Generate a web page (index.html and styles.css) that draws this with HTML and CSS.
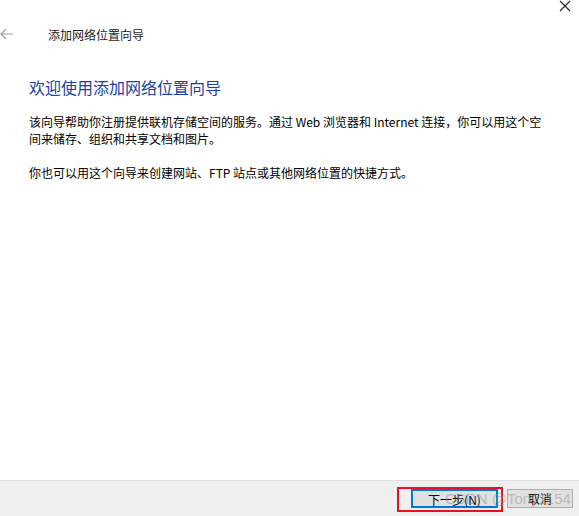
FILE: index.html
```html
<!DOCTYPE html>
<html lang="zh-CN">
<head>
    <meta charset="UTF-8">
    <meta name="viewport" content="width=device-width, initial-scale=1.0">
    <title>添加网络位置向导</title>
    <link rel="stylesheet" href="styles.css">
</head>
<body>
    <div class="wizard">
        <div class="close">
            <svg width="12" height="12" viewBox="0 0 12 12"><path d="M1 1 L11 11 M11 1 L1 11" stroke="#222" stroke-width="1.1" fill="none"/></svg>
        </div>

        <div class="titlebar">
            <span class="back">
                <svg width="14" height="12" viewBox="0 0 14 12"><path d="M6 1 L1 6 L6 11 M1 6 L13 6" stroke="#a0a0a0" stroke-width="1.2" fill="none"/></svg>
            </span>
            <span class="title">添加网络位置向导</span>
        </div>

        <div class="content">
            <h1>欢迎使用添加网络位置向导</h1>
            <p>该向导帮助你注册提供联机存储空间的服务。通过 Web 浏览器和 Internet 连接，你可以用这个空间来储存、组织和共享文档和图片。</p>
            <p>你也可以用这个向导来创建网站、FTP 站点或其他网络位置的快捷方式。</p>
        </div>

        <div class="footer">
            <div class="mark"></div>
            <button class="btn btn-default">下一步(N)</button>
            <button class="btn">取消</button>
            <span class="watermark">CSDN @Tony1154</span>
        </div>
    </div>
</body>
</html>
```

FILE: styles.css
```css
body {
    margin: 0;
    font-family: "Microsoft YaHei", "Noto Sans CJK SC", sans-serif;
    font-size: 12px;
    color: #000;
    background: #fff;
}
.wizard {
    position: relative;
    width: 579px;
    height: 516px;
    display: flex;
    flex-direction: column;
    overflow: hidden;
}
.close {
    position: absolute;
    top: 0;
    right: 8px;
    line-height: 0;
}
.titlebar {
    display: flex;
    align-items: center;
    height: 20px;
    margin-top: 24px;
}
.back {
    width: 14px;
    line-height: 0;
}
.title {
    margin-left: 34px;
    color: #1a1a1a;
}
.content {
    flex: 1;
    padding: 0 24px 0 29px;
}
.content h1 {
    margin: 32px 0 0;
    font-size: 16px;
    font-weight: normal;
    color: #1d3fa3;
    line-height: 22px;
}
.content p {
    margin: 15px 0 0;
    line-height: 17px;
    width: 520px;
}
.content p + p {
    margin-top: 17px;
}
.footer {
    position: relative;
    height: 35px;
    background: #f0f0f0;
    border-top: 1px solid #dfdfdf;
    display: flex;
    align-items: center;
    justify-content: flex-end;
    padding-right: 6px;
    gap: 9px;
}
.btn {
    font-family: inherit;
    font-size: 12px;
    height: 19px;
    width: 66px;
    padding: 0;
    background: #e1e1e1;
    border: 1px solid #adadad;
    color: #000;
}
.btn-default {
    width: 87px;
    border: 2px solid #0078d7;
}
.mark {
    position: absolute;
    left: 397px;
    top: 6px;
    width: 102px;
    height: 21px;
    border: 2px solid #e81123;
}
.watermark {
    position: absolute;
    left: 445px;
    top: 9px;
    font-family: "Liberation Sans", sans-serif;
    font-size: 15px;
    color: rgba(150, 150, 150, 0.55);
    pointer-events: none;
}
```
